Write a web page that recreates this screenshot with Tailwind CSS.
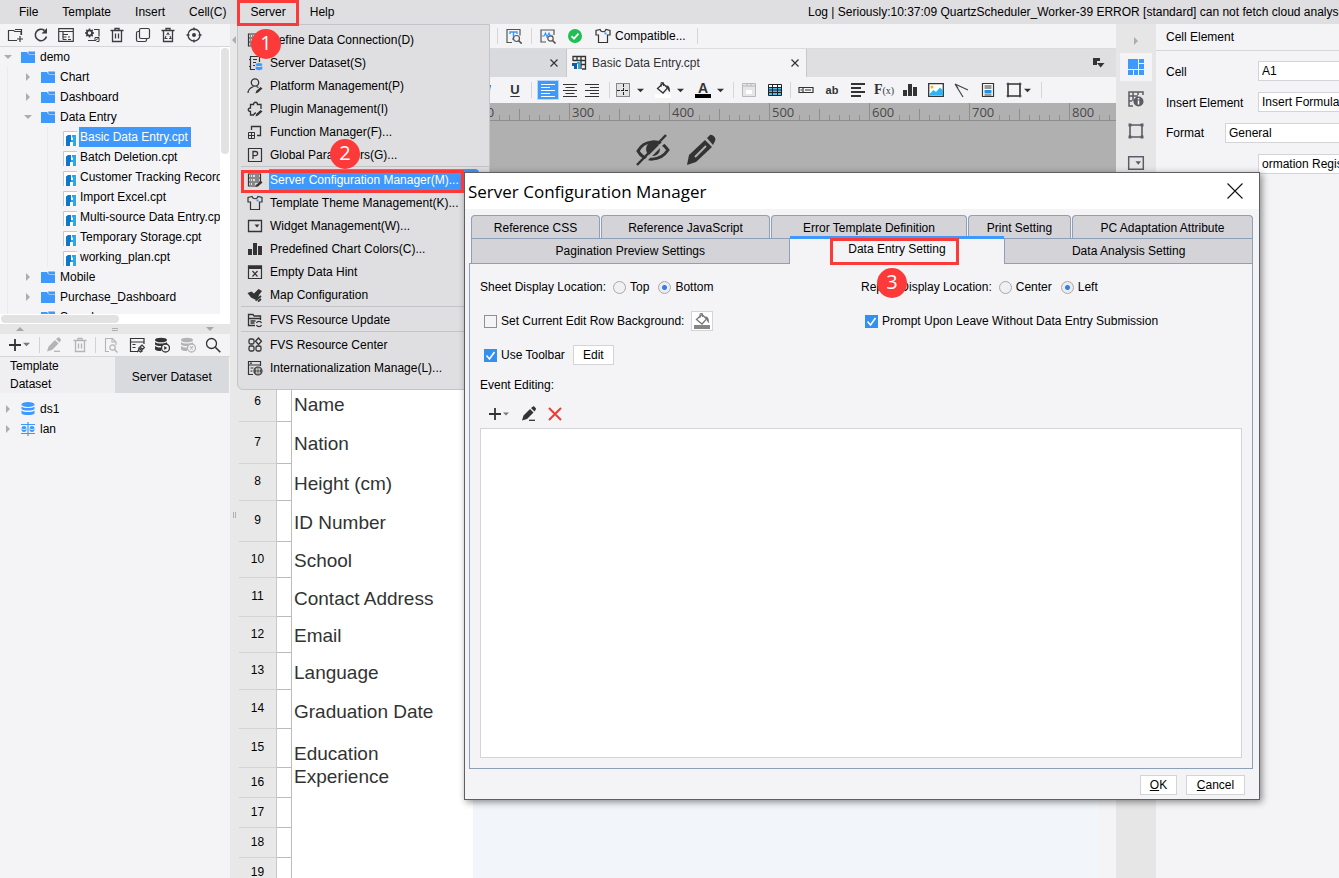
<!DOCTYPE html>
<html lang="en">
<head>
<meta charset="utf-8">
<title>Report Designer</title>
<script src="https://cdn.jsdelivr.net/npm/@tailwindcss/browser@4"></script>
</head>
<body class="h-screen overflow-hidden bg-[#f4f4f7] font-['Liberation_Sans',Arial,sans-serif] text-xs leading-5 text-black">

<!-- Shared icon set -->
<svg class="hidden" aria-hidden="true">
  <symbol id="folder" viewBox="0 0 16 14"><path d="M1 2h6l1 1.500h7V13H1z" fill="#3f98fb"/><path d="M8 1.500h7v3H9z" fill="#3f98fb"/><path d="M7.500 2.500l1.500 2h6" fill="none" stroke="#a9d0fd" stroke-width=".8"/></symbol>
  <symbol id="cpt" viewBox="0 0 14 15"><path d="M1 1h13v14H1z" fill="#fff"/><path d="M.500 15V.500H14" fill="none" stroke="#c8c8c8"/><path d="M3 15V5.500L5 4h3v5h2v2H7v4z" fill="#0a78cc"/><path d="M9 4h4v11h-3v-4H8V9h2V6.500H9z" fill="#2aa9ea"/></symbol>
  <symbol id="right" viewBox="0 0 8 8"><path d="M2 0l4 4-4 4z" fill="#adadad"/></symbol>
  <symbol id="down" viewBox="0 0 8 8"><path d="M0 2h8L4 6z" fill="currentColor"/></symbol>
  <symbol id="up" viewBox="0 0 8 8"><path d="M0 6h8L4 2z" fill="currentColor"/></symbol>
  <symbol id="newfolder" viewBox="0 0 16 16"><path d="M10 13.500H1.500v-10h5l1.500 1h6V8M8 2.500h6.500V8M10 12h6M13 9v6" fill="none" stroke="currentColor" stroke-width="1.200"/></symbol>
  <symbol id="refresh" viewBox="0 0 16 16"><path d="M13.500 9.500A5.700 5.700 0 1 1 11.500 3.500" fill="none" stroke="currentColor" stroke-width="1.600"/><path d="M14 1v5.500H8.500z" fill="currentColor"/></symbol>
  <symbol id="treewin" viewBox="0 0 16 16"><path d="M.700 1.700h14.600v12.600H.700zM.700 4.500h14.600M5 4.500v8M5 7.500h5M5 10h3.500M5 12.500h3.500M10 10h2M10 12.500h3" fill="none" stroke="currentColor" stroke-width="1.200"/></symbol>
  <symbol id="gearwin" viewBox="0 0 16 16"><path d="M10 2.500h5v7M4 13.500h7" fill="none" stroke="currentColor" stroke-width="1.200"/><circle cx="5.500" cy="6" r="2.600" fill="none" stroke="currentColor" stroke-width="1.800"/><path d="M5.500 1.500v2M5.500 8.500v2M1 6h2M8 6h2M2.300 2.800l1.400 1.400M7.300 7.800l1.400 1.400M8.700 2.800L7.300 4.200M3.700 7.800L2.300 9.200" stroke="currentColor" stroke-width="1.500"/><path d="M11 14v-3.500h4zM15 10.500v4h-2.500" fill="none" stroke="currentColor"/></symbol>
  <symbol id="trash" viewBox="0 0 16 16"><path d="M1.500 3.500h13M6 3V1.500h4V3M3.500 3.500v11h9v-11M6.500 6.500v5M9.500 6.500v5" fill="none" stroke="currentColor" stroke-width="1.300"/></symbol>
  <symbol id="copy" viewBox="0 0 16 16"><rect x="4.500" y="1.500" width="10" height="10" rx="1.500" fill="none" stroke="currentColor" stroke-width="1.200"/><path d="M4 4.500H3A1.500 1.500 0 0 0 1.500 6v7A1.500 1.500 0 0 0 3 14.500h7a1.500 1.500 0 0 0 1.500-1.500v-1" fill="none" stroke="currentColor" stroke-width="1.200"/></symbol>
  <symbol id="recycle" viewBox="0 0 16 16"><path d="M1.500 3.500h13M6 3V1.500h4V3M3.500 3.500v11h9v-11" fill="none" stroke="currentColor" stroke-width="1.300"/><path d="M6.700 8L8 6l1.300 2M10 9l1 2.500H9M7.500 11.500H5L6 9" fill="none" stroke="currentColor" stroke-width="1.100"/></symbol>
  <symbol id="target" viewBox="0 0 16 16"><circle cx="8" cy="8" r="6" fill="none" stroke="currentColor" stroke-width="1.300"/><circle cx="8" cy="8" r="2" fill="currentColor"/><path d="M8 .500v3M8 12.500v3M.500 8h3M12.500 8h3" stroke="currentColor" stroke-width="1.300"/></symbol>
  <symbol id="plus" viewBox="0 0 16 16"><path d="M8 2v12M2 8h12" stroke="currentColor" stroke-width="1.800"/></symbol>
  <symbol id="pencil" viewBox="0 0 16 16"><path d="M1 14.500l1.500-5L9 3l3.500 3.500L6 13zM10 2l2-1.500a1 1 0 0 1 1.300 0l1.500 1.700a1 1 0 0 1 0 1.300L13.500 5.500z" fill="currentColor"/><path d="M8 14.300h6" stroke="currentColor" stroke-width="1.300"/></symbol>
  <symbol id="docsearch" viewBox="0 0 16 16"><path d="M6 14.500H2.500v-13h7l3.500 3.500v3M9 1.500V5h4" fill="none" stroke="currentColor" stroke-width="1.100"/><circle cx="9.500" cy="10.500" r="2.700" fill="none" stroke="currentColor" stroke-width="1.200"/><path d="M11.500 12.500l3 3" stroke="currentColor" stroke-width="1.400"/></symbol>
  <symbol id="winlink" viewBox="0 0 16 16"><path d="M15 7V1.500H1.500v13H8M1.500 5H15M3.500 7.500h3M3.500 10.500h3" fill="none" stroke="currentColor" stroke-width="1.200"/><path d="M8 15l2-2M9.500 10.500l4 4M10 11l-.500 2.500 2 1.500 2-1M11 10l2-2 2.500 2.500-2 2z" fill="none" stroke="currentColor" stroke-width="1.200"/></symbol>
  <symbol id="dbplay" viewBox="0 0 16 16"><ellipse cx="7" cy="3" rx="6" ry="2.300" fill="currentColor"/><path d="M1 5c2 2 10 2 12 0v2.500C11 9.500 3 9.500 1 7.500zM1 9c2 1.500 5 1.700 6.500 1.500l-.500 3.500C4 14 2 13.500 1 12.500z" fill="currentColor"/><circle cx="11.500" cy="11" r="4" fill="#f4f4f7" stroke="currentColor" stroke-width="1.300"/><path d="M10.200 9v4l3-2z" fill="currentColor"/></symbol>
  <symbol id="dbx" viewBox="0 0 16 16"><ellipse cx="7" cy="3" rx="6" ry="2.300" fill="currentColor"/><path d="M1 5c2 2 10 2 12 0v2.500C11 9.500 3 9.500 1 7.500zM1 9c2 1.500 5 1.700 6.500 1.500l-.500 3.500C4 14 2 13.500 1 12.500z" fill="currentColor"/><circle cx="11.500" cy="11" r="4" fill="#f4f4f7" stroke="currentColor" stroke-width="1.300"/><path d="M10 9.500l3 3M13 9.500l-3 3" stroke="currentColor" stroke-width="1.200"/></symbol>
  <symbol id="search" viewBox="0 0 16 16"><circle cx="6.500" cy="6.500" r="5" fill="none" stroke="currentColor" stroke-width="1.300"/><path d="M10.300 10.300l5 5" stroke="currentColor" stroke-width="1.600"/></symbol>
  <symbol id="db" viewBox="0 0 14 16"><ellipse cx="7" cy="3.500" rx="6.500" ry="2.500" fill="#3f98fb"/><path d="M.500 5.500c2 2 11 2 13 0V8c-2 2-11 2-13 0zM.500 9.500c2 2 11 2 13 0v3c-2 2-11 2-13 0z" fill="#3f98fb"/></symbol>
  <symbol id="link" viewBox="0 0 16 16"><path d="M1 3.500h14M1 12.500h14M8 1v14" stroke="#3f98fb" stroke-width="1.200"/><ellipse cx="4" cy="8" rx="2.500" ry="3" fill="#3f98fb"/><ellipse cx="12" cy="8" rx="2.500" ry="3" fill="#3f98fb"/><path d="M1.500 7.500c2 1.500 3 1.500 5 0M9.500 7.500c2 1.500 3 1.500 5 0" fill="none" stroke="#cfe4fd"/></symbol>
  <symbol id="server" viewBox="0 0 16 16"><path d="M1.500 2h12v4h-12zM1.500 6v4h12V6M1.500 10v4H9M3 4h1M5 4h1M8 4h4M3 8h1M5 8h1M8 8h4M3 12h1M5 12h3" fill="none" stroke="currentColor" stroke-width="1.200"/><path d="M8.500 15l1-2.500L14 9l1.500 1.500-4.500 4z" fill="currentColor"/></symbol>
  <symbol id="serverds" viewBox="0 0 16 16"><path d="M8 14.500H3.500v-13h9V7M2 4.500h1.500M2 11.500h1.500M6 4.500h4M6 7.500h3M6 10.500h2" fill="none" stroke="currentColor" stroke-width="1.200"/><ellipse cx="12" cy="9.500" rx="3.300" ry="1.500" fill="#3f98fb"/><path d="M8.700 11c1 1.300 5.600 1.300 6.600 0v3c-1 1.500-5.600 1.500-6.600 0z" fill="#3f98fb"/></symbol>
  <symbol id="user" viewBox="0 0 16 16"><circle cx="8" cy="4.500" r="3.700" fill="none" stroke="currentColor" stroke-width="1.300"/><path d="M1 15c0-4 3-5.500 5.500-6.500M9.500 8.500l2 1" fill="none" stroke="currentColor" stroke-width="1.300"/><path d="M8.500 15.500l.700-2.500L13.500 9l2 1.500-4.500 4z" fill="currentColor"/></symbol>
  <symbol id="plugin" viewBox="0 0 16 16"><path d="M7 14H3.500v-3.500C.500 10.500 .500 7 3.500 7V3.500H6.500c0-3 4-3 4 0H14V8M7 14c0-1.500 1-2 2-2" fill="none" stroke="currentColor" stroke-width="1.300"/><path d="M8.500 15.500l.700-2.500L13.500 9l2 1.500-4.500 4z" fill="currentColor"/></symbol>
  <symbol id="func" viewBox="0 0 16 16"><path d="M4.500 6V2.500h9v9H10" fill="none" stroke="currentColor" stroke-width="1.300"/><path d="M1.500 8.500h6v6h-6zM1.500 11.500h6M4.500 8.500v6" fill="none" stroke="currentColor"/></symbol>
  <symbol id="param" viewBox="0 0 16 16"><path d="M1.500 1.500h13v13h-13z" fill="none" stroke="currentColor" stroke-width="1.200"/><path d="M6 12V4.500h2.500a2 2 0 0 1 0 4.200H6" fill="none" stroke="currentColor" stroke-width="1.300"/></symbol>
  <symbol id="shirt" viewBox="0 0 16 16"><path d="M5 1.500L1 2.500v4.500h2.500v7.500h9V7H15V2.500l-4-1c-1 3-5 3-6 0z" fill="none" stroke="currentColor" stroke-width="1.200"/><path d="M9 4.500h2.500v2H10z" fill="#3f98fb"/></symbol>
  <symbol id="combo" viewBox="0 0 16 16"><path d="M1.500 2.500h13v11h-13z" fill="none" stroke="currentColor" stroke-width="1.300"/><path d="M7.500 6.500h5L10 9.500z" fill="currentColor"/></symbol>
  <symbol id="bars" viewBox="0 0 16 16"><path d="M1 8h4v6H1zM6 2h4v12H6zM11 5h4v9h-4z" fill="currentColor"/></symbol>
  <symbol id="empty" viewBox="0 0 16 16"><path d="M1.500 2h13v12.500h-13z" fill="none" stroke="currentColor" stroke-width="1.200"/><path d="M1 1.500h14V5H1z" fill="currentColor"/><path d="M5.500 7l5 5.500M10.500 7l-5 5.500" stroke="currentColor" stroke-width="1.200"/></symbol>
  <symbol id="map" viewBox="0 0 16 16"><path d="M.500 6l4-1.500L7 6.500 11.500 2 15 4l-3 4-1 3-3 1.500-4-2z" fill="currentColor"/><path d="M8.500 13.500L14 9M11 14.500l3-2.500" stroke="currentColor" stroke-width="1.800"/></symbol>
  <symbol id="fvsup" viewBox="0 0 16 16"><path d="M8 13.500H1.500v-11H6l1 1.500h6.500V8M1.500 6.500h12M3.500 9h5M3.500 11h4" fill="none" stroke="currentColor" stroke-width="1.300"/><path d="M14.500 11a2.700 2.700 0 0 0-5 0M9.500 13a2.700 2.700 0 0 0 5 0" fill="none" stroke="currentColor" stroke-width="1.300"/></symbol>
  <symbol id="fvsc" viewBox="0 0 16 16"><rect x="2" y="2" width="5" height="5" rx="1.500" fill="none" stroke="currentColor" stroke-width="1.300"/><rect x="2" y="9" width="5" height="5" rx="1.500" fill="none" stroke="currentColor" stroke-width="1.300"/><rect x="9" y="9" width="5" height="5" rx="1.500" fill="none" stroke="currentColor" stroke-width="1.300"/><path d="M11.500 1l3 3.300-3 3.200-3-3.200z" fill="none" stroke="currentColor" stroke-width="1.300"/></symbol>
  <symbol id="intl" viewBox="0 0 16 16"><path d="M6 14.500H1.500v-13h12V6M1.500 5h12M3 3.200h2M3.500 8h3M3.500 11h2" fill="none" stroke="currentColor" stroke-width="1.200"/><circle cx="11" cy="11" r="4" fill="none" stroke="currentColor" stroke-width="1.200"/><path d="M7 11h8M11 7v8M9 8c-.600 2-.600 4 0 6M13 8c.600 2 .600 4 0 6" fill="none" stroke="currentColor" stroke-width=".8"/></symbol>
  <symbol id="tfind" viewBox="0 0 16 16"><path d="M6 14.500H1v-13h13v6" fill="none" stroke="#555" stroke-width="1.200"/><path d="M4 6V4h7v2M7.500 4v7M6 11h3" fill="none" stroke="#3f98fb" stroke-width="1.400"/><circle cx="10.500" cy="10.500" r="3" fill="#f4f4f7" stroke="#555" stroke-width="1.200"/><path d="M12.700 12.700l3 3" stroke="#555" stroke-width="1.600"/></symbol>
  <symbol id="wave" viewBox="0 0 16 16"><path d="M6 14H1V2h13v5" fill="none" stroke="#555" stroke-width="1.200"/><path d="M2 8h2l1.500-3L7 9l2-4 1.500 3H13" fill="none" stroke="#3f98fb" stroke-width="1.200"/><circle cx="10.500" cy="10.500" r="2.700" fill="#f4f4f7" stroke="#555" stroke-width="1.200"/><path d="M12.500 12.500l3 3" stroke="#555" stroke-width="1.600"/></symbol>
  <symbol id="ok" viewBox="0 0 16 16"><circle cx="8" cy="8" r="7" fill="#1fbf54"/><path d="M4.500 8.200l2.500 2.500 4.500-5" fill="none" stroke="#fff" stroke-width="1.800"/></symbol>
  <symbol id="close" viewBox="0 0 8 8"><path d="M.500.500l7 7M7.500.500l-7 7" stroke="currentColor" stroke-width="1.200"/></symbol>
  <symbol id="bucket" viewBox="0 0 16 12"><path d="M2.500 6.500L8 1.500l4.500 4.500L8 11z" fill="none" stroke="currentColor" stroke-width="1.300"/><path d="M6 5V.700h2.500V4" fill="none" stroke="currentColor"/><path d="M11 3.500c3 0 4 1.500 4 6.500-1.500-.500-2-2-2.500-4z" fill="currentColor"/></symbol>
  <symbol id="tl" viewBox="0 0 16 14"><path d="M1 1.500h14M1 4.500h9M1 7.500h14M1 10.500h9M1 13.500h14" stroke="currentColor"/></symbol>
  <symbol id="tc" viewBox="0 0 16 14"><path d="M1 1.500h14M3.500 4.500h9M1 7.500h14M3.500 10.500h9M1 13.500h14" stroke="currentColor"/></symbol>
  <symbol id="tr" viewBox="0 0 16 14"><path d="M1 1.500h14M6 4.500h9M1 7.500h14M6 10.500h9M1 13.500h14" stroke="currentColor"/></symbol>
</svg>

<div class="flex h-full flex-col">
  <!-- Menu bar -->
  <header class="flex h-6 shrink-0 items-center bg-[#dfdfe2] whitespace-nowrap">
    <nav class="flex w-[808px] shrink-0 gap-6 pl-[19px]">
      <button>File</button><button>Template</button><button>Insert</button><button>Cell(C)</button><button>Server</button><button>Help</button>
    </nav>
    <p class="min-w-0 flex-1 overflow-hidden">Log | Seriously:10:37:09 QuartzScheduler_Worker-39 ERROR [standard] can not fetch cloud analysis</p>
  </header>

  <div class="flex min-h-0 flex-1">
    <!-- Left sidebar -->
    <aside class="flex w-[230px] shrink-0 flex-col">
      <div class="flex h-[23px] shrink-0 items-center justify-between border-b border-[#d6d6d9] pr-7 pb-px pl-[7px] text-[#3c3c40]">
        <button aria-label="New folder"><svg class="size-4"><use href="#newfolder"/></svg></button>
        <button aria-label="Refresh"><svg class="size-4"><use href="#refresh"/></svg></button>
        <button aria-label="Show in tree"><svg class="size-4"><use href="#treewin"/></svg></button>
        <button aria-label="Settings"><svg class="size-4"><use href="#gearwin"/></svg></button>
        <button aria-label="Delete"><svg class="size-4"><use href="#trash"/></svg></button>
        <button aria-label="Copy"><svg class="size-4"><use href="#copy"/></svg></button>
        <button aria-label="Recycle bin"><svg class="size-4"><use href="#recycle"/></svg></button>
        <button aria-label="Locate"><svg class="size-4"><use href="#target"/></svg></button>
      </div>
      <div class="flex h-[267px] shrink-0">
        <ul class="min-w-0 flex-1 overflow-hidden whitespace-nowrap">
          <li class="flex h-5 items-center pl-1"><svg class="size-2 text-[#adadad]"><use href="#down"/></svg><svg class="ml-2 h-[14px] w-4"><use href="#folder"/></svg><span class="ml-1">demo</span></li>
          <li class="ml-[7px] border-l border-[#eaeaed]">
            <ul>
              <li class="flex h-5 items-center pl-4"><svg class="size-2"><use href="#right"/></svg><svg class="ml-2 h-[14px] w-4"><use href="#folder"/></svg><span class="ml-1">Chart</span></li>
              <li class="flex h-5 items-center pl-4"><svg class="size-2"><use href="#right"/></svg><svg class="ml-2 h-[14px] w-4"><use href="#folder"/></svg><span class="ml-1">Dashboard</span></li>
              <li class="flex h-5 items-center pl-4"><svg class="size-2 text-[#adadad]"><use href="#down"/></svg><svg class="ml-2 h-[14px] w-4"><use href="#folder"/></svg><span class="ml-1">Data Entry</span></li>
              <li class="ml-[39px] border-l border-[#eaeaed]">
                <ul>
                  <li class="flex h-5 items-center pl-[15px]"><svg class="mt-[3px] h-[15px] w-[14px]"><use href="#cpt"/></svg><span class="ml-[2px] bg-[#3f98fb] pr-[3px] pl-[1px] text-white">Basic Data Entry.cpt</span></li>
                  <li class="flex h-5 items-center pl-[15px]"><svg class="mt-[3px] h-[15px] w-[14px] shrink-0"><use href="#cpt"/></svg><span class="ml-[3px]">Batch Deletion.cpt</span></li>
                  <li class="flex h-5 items-center pl-[15px]"><svg class="mt-[3px] h-[15px] w-[14px] shrink-0"><use href="#cpt"/></svg><span class="ml-[3px]">Customer Tracking Record.cpt</span></li>
                  <li class="flex h-5 items-center pl-[15px]"><svg class="mt-[3px] h-[15px] w-[14px] shrink-0"><use href="#cpt"/></svg><span class="ml-[3px]">Import Excel.cpt</span></li>
                  <li class="flex h-5 items-center pl-[15px]"><svg class="mt-[3px] h-[15px] w-[14px] shrink-0"><use href="#cpt"/></svg><span class="ml-[3px]">Multi-source Data Entry.cpt</span></li>
                  <li class="flex h-5 items-center pl-[15px]"><svg class="mt-[3px] h-[15px] w-[14px] shrink-0"><use href="#cpt"/></svg><span class="ml-[3px]">Temporary Storage.cpt</span></li>
                  <li class="flex h-5 items-center pl-[15px]"><svg class="mt-[3px] h-[15px] w-[14px] shrink-0"><use href="#cpt"/></svg><span class="ml-[3px]">working_plan.cpt</span></li>
                </ul>
              </li>
              <li class="flex h-5 items-center pl-4"><svg class="size-2"><use href="#right"/></svg><svg class="ml-2 h-[14px] w-4"><use href="#folder"/></svg><span class="ml-1">Mobile</span></li>
              <li class="flex h-5 items-center pl-4"><svg class="size-2"><use href="#right"/></svg><svg class="ml-2 h-[14px] w-4"><use href="#folder"/></svg><span class="ml-1">Purchase_Dashboard</span></li>
              <li class="flex h-5 items-center pl-4"><svg class="invisible size-2"><use href="#right"/></svg><svg class="ml-2 h-[14px] w-4"><use href="#folder"/></svg><span class="ml-1">Sample</span></li>
            </ul>
          </li>
        </ul>
        <div class="w-[10px] bg-white pt-[1px] pl-[1px]"><div class="h-[106px] w-2 rounded bg-[#e2e2e2]"></div></div>
      </div>
      <div class="flex h-[10px] shrink-0 bg-white pt-[1px] pl-[1px]"><div class="h-2 w-[118px] rounded bg-[#e2e2e2]"></div></div>
      <div class="flex h-[10px] shrink-0 items-center justify-between bg-[#e6e6e6] pr-4 pl-4 text-[#a8a8a8]">
        <svg class="size-2"><use href="#up"/></svg><div class="h-[3px] w-[6px] border-y border-[#b0b0b0]"></div><svg class="size-2"><use href="#down"/></svg>
      </div>
      <div class="flex h-[23px] shrink-0 items-center border-b border-[#d6d6d9] pb-px pl-[7px] text-[#333]">
        <button class="flex items-center" aria-label="Add dataset"><svg class="size-4"><use href="#plus"/></svg><svg class="size-[7px] text-[#777]"><use href="#down"/></svg></button>
        <div class="ml-[9px] h-4 w-px bg-[#d2d2d5]"></div>
        <div class="ml-[6px] flex gap-[10px] text-[#b4b4b6]">
          <button aria-label="Edit"><svg class="size-4"><use href="#pencil"/></svg></button>
          <button aria-label="Delete"><svg class="size-4"><use href="#trash"/></svg></button>
        </div>
        <div class="ml-[7px] h-4 w-px bg-[#d2d2d5]"></div>
        <div class="flex flex-1 justify-between pr-[9px] pl-[7px]">
          <button class="text-[#b4b4b6]" aria-label="Preview"><svg class="size-4"><use href="#docsearch"/></svg></button>
          <button aria-label="Connection"><svg class="size-4"><use href="#winlink"/></svg></button>
          <button aria-label="Run"><svg class="size-4"><use href="#dbplay"/></svg></button>
          <button class="text-[#b4b4b6]" aria-label="Stop"><svg class="size-4"><use href="#dbx"/></svg></button>
          <button aria-label="Search"><svg class="size-4"><use href="#search"/></svg></button>
        </div>
      </div>
      <div class="grid h-9 shrink-0 grid-cols-2 pr-px">
        <button class="bg-[#efeff2] pr-10 pl-[10px] text-left leading-[18px]">Template Dataset</button>
        <button class="bg-[#d9dade] pt-[3px]">Server Dataset</button>
      </div>
      <ul class="pt-[6px]">
        <li class="flex h-5 items-center pl-1"><svg class="size-2"><use href="#right"/></svg><svg class="ml-[9px] h-4 w-[14px]"><use href="#db"/></svg><span class="ml-[5px]">ds1</span></li>
        <li class="flex h-5 items-center pl-1"><svg class="size-2"><use href="#right"/></svg><svg class="ml-2 size-4"><use href="#link"/></svg><span class="ml-1">lan</span></li>
      </ul>
    </aside>

    <!-- Splitter -->
    <div class="flex w-[9px] shrink-0 flex-col justify-between bg-[#e8e8e8] pt-3 pb-[360px]">
      <svg class="size-2 rotate-180"><use href="#right"/></svg>
      <div class="ml-[3px] h-[6px] w-[3px] border-x border-[#b0b0b0]"></div>
    </div>

    <!-- Designer -->
    <main class="flex min-w-0 flex-1 flex-col">
      <div class="flex h-[25px] shrink-0 items-center border-b border-[#dcdcdf] pl-[258px] text-[#333]">
        <div class="h-4 w-px bg-[#d6d6d9]"></div>
        <button class="ml-2" aria-label="Find template"><svg class="size-4"><use href="#tfind"/></svg></button>
        <div class="ml-[9px] h-4 w-px bg-[#d6d6d9]"></div>
        <button class="ml-2" aria-label="Performance"><svg class="size-4"><use href="#wave"/></svg></button>
        <button class="ml-[11px]" aria-label="Status"><svg class="size-4"><use href="#ok"/></svg></button>
        <button class="ml-3 flex items-center gap-[4px] text-black"><svg class="size-4 text-[#333]"><use href="#shirt"/></svg>Compatible...</button>
        <div class="ml-[11px] h-4 w-px bg-[#d6d6d9]"></div>
      </div>
      <div class="flex h-[28px] shrink-0 items-center bg-[#dfdfe2] text-[#333]">
        <div class="flex h-full w-[328px] items-center justify-end border-r border-[#c8c8cc] bg-[#d9dade] pr-2"><button aria-label="Close tab"><svg class="size-2"><use href="#close"/></svg></button></div>
        <div class="flex h-full w-[240px] items-center border-r border-[#c8c8cc] bg-[#f4f4f7] pr-[7px] pl-[4px]">
          <svg class="size-4" viewBox="0 0 16 16"><path d="M2 6V1.500h12.500V14H11M2 5.500h12.500M6 1.500V6M10 1.500V14M10 9.500h4.500" fill="none" stroke="#333" stroke-width="1.300"/><path d="M1 8h5v6H3v-3H1z" fill="#0b5fa8"/><path d="M6 7h3v7H7V9H6z" fill="#2aa9ea"/></svg>
          <span class="ml-[5px] flex-1">Basic Data Entry.cpt</span>
          <button aria-label="Close Basic Data Entry.cpt"><svg class="size-2"><use href="#close"/></svg></button>
        </div>
        <button class="mr-[11px] ml-auto" aria-label="Tab list"><svg class="h-3 w-[13px]" viewBox="0 0 13 12"><path d="M1 1h7v3H5v4H1z" fill="#333"/><path d="M5 6h7.500L8.700 10.500z" fill="#333"/></svg></button>
      </div>
      <div class="flex h-[26px] shrink-0 items-center pl-[244px] text-[#333]">
        <button class="mr-[7px] w-3 text-sm italic" aria-label="Italic">I</button>
        <button class="w-[26px] text-[13px] font-bold underline underline-offset-2">U</button>
        <div class="ml-[3px] h-4 w-px bg-[#d6d6d9]"></div>
        <button class="ml-[5px] grid h-5 w-[22px] place-items-center border border-[#b9d6f8] bg-[#3f98fb] text-white" aria-label="Align left"><svg class="h-[14px] w-4"><use href="#tl"/></svg></button>
        <button class="ml-[3px]" aria-label="Align center"><svg class="h-[14px] w-4"><use href="#tc"/></svg></button>
        <button class="ml-[6px]" aria-label="Align right"><svg class="h-[14px] w-4"><use href="#tr"/></svg></button>
        <div class="ml-[9px] h-4 w-px bg-[#d6d6d9]"></div>
        <button class="ml-[5px] flex items-center gap-[6px]" aria-label="Borders"><svg class="size-4" viewBox="0 0 16 16"><path d="M1.500 1.500h13v13h-13z" fill="#e2e2e5" stroke="#222" stroke-dasharray="1 1"/><path d="M8.500 2v12M2 8.500h12" stroke="#222" stroke-dasharray="3 1"/></svg><svg class="size-[7px]"><use href="#down"/></svg></button>
        <button class="ml-[11px] flex items-center gap-[6px]" aria-label="Fill colour"><span class="border-b-[4px] border-white"><svg class="h-3 w-4"><use href="#bucket"/></svg></span><svg class="size-[7px]"><use href="#down"/></svg></button>
        <button class="ml-[11px] flex items-center gap-[6px]" aria-label="Text colour"><span class="h-4 w-4 border-b-[4px] border-black text-sm leading-3 font-bold">A</span><svg class="size-[7px]"><use href="#down"/></svg></button>
        <div class="ml-[9px] h-4 w-px bg-[#d6d6d9]"></div>
        <div class="ml-[7px] flex items-center gap-[10px]">
          <button aria-label="Merge cells"><svg class="size-4" viewBox="0 0 16 16"><path d="M1.500 1.500h13v13h-13zM1.500 4h13M6 1.500V4M10 1.500V4" fill="#e6e6e9" stroke="#b8b8ba"/><path d="M5 8h6v4H5z" fill="#fff"/></svg></button>
          <button aria-label="Split cells"><svg class="size-4" viewBox="0 0 16 16"><path d="M1.500 2.500h13v11h-13z" fill="#45bdf5"/><path d="M1 2.500h14v3H1z" fill="#fff"/><path d="M1.500 2.500h13v11h-13zM1.500 5.500h13M1.500 8h13M1.500 10.500h13M5.500 2v12M10.500 2v12" fill="none" stroke="#222"/></svg></button>
          <span class="-mx-[3px] h-4 w-px bg-[#d6d6d9]"></span>
          <button aria-label="Widget"><svg class="size-4" viewBox="0 0 16 16"><path d="M1 5.500h14v5H1zM5 5.500v5M7 8h6M2.500 8h1.500" fill="none" stroke="#333" stroke-width="1.200"/></svg></button>
          <button class="w-4 text-[11px] font-bold">ab</button>
          <button aria-label="Rich text"><svg class="size-4" viewBox="0 0 16 16"><path d="M1 2h14M1 6h10M1 10h14M1 14h10" stroke="#333" stroke-width="1.800"/></svg></button>
          <button class="flex w-4 items-baseline justify-center font-['Liberation_Serif',serif] text-sm font-bold" aria-label="Formula">F<span class="text-[10px] font-normal">(x)</span></button>
          <button aria-label="Chart"><svg class="size-4"><use href="#bars"/></svg></button>
          <button aria-label="Image"><svg class="size-4" viewBox="0 0 16 16"><path d="M.700 1.700h14.600v12.600H.700z" fill="#fff" stroke="#333" stroke-width="1.300"/><path d="M1.500 12l4-4 2.500 2 4-4.500 3 3v5h-13.500z" fill="#2fb4f3"/><circle cx="4" cy="5" r="1.500" fill="#f7b32b"/></svg></button>
          <button aria-label="Slope"><svg class="size-4" viewBox="0 0 16 16"><path d="M1 2l13 6M1 2l8 13M1 2l3 4" fill="none" stroke="#444" stroke-width="1.200"/></svg></button>
          <button aria-label="Sub report"><svg class="size-4" viewBox="0 0 16 16"><path d="M2.500 1.500h11v13h-11z" fill="#fff" stroke="#333" stroke-width="1.200"/><path d="M4.500 4h7M4.500 6h7M4.500 13h7" stroke="#333"/><path d="M4.500 8h7v3.500h-7z" fill="#2090e8"/></svg></button>
          <button class="flex items-center" aria-label="Frame"><svg class="size-4" viewBox="0 0 16 16"><path d="M2 2h12v12H2z" fill="none" stroke="#333" stroke-width="1.200"/><path d="M.500 2h15M.500 14h15M2 .500v15M14 .500v15" stroke="#333"/></svg><svg class="ml-[2px] size-[7px]"><use href="#down"/></svg></button>
          <span class="h-4 w-px bg-[#d6d6d9]"></span>
        </div>
      </div>
      <!-- Ruler -->
      <div class="flex h-[18px] shrink-0 overflow-hidden border-b border-[#8e8e8e] bg-[#b0b0b0] pl-[30px] font-['Open_Sans',sans-serif] text-[13px] leading-[18px] text-[#4a4a4a]">
        <svg class="h-[17px] w-full" aria-label="Ruler">
          <defs><pattern id="ticks" width="100" height="17" patternUnits="userSpaceOnUse"><path d="M.500 0v17M50.500 6v11M40.500 12v5M30.500 12v5M60.500 12v5M70.500 12v5M80.500 12v5M90.500 12v5" stroke="#8e8e8e"/></pattern></defs>
          <rect width="100%" height="17" fill="url(#ticks)"/>
          <g fill="#4a4a4a"><text x="203" y="14">200</text><text x="303" y="14">300</text><text x="403" y="14">400</text><text x="503" y="14">500</text><text x="603" y="14">600</text><text x="703" y="14">700</text><text x="803" y="14">800</text></g>
        </svg>
      </div>
      <!-- Sheet -->
      <div class="flex h-[261px] shrink-0 items-start bg-[#b0b0b0] pt-[13px] pl-[396px] text-[#333]">
        <svg class="h-8 w-9" viewBox="0 0 36 32"><path d="M3 17c6-11 22-13 30-1-8 12-24 12-30 1z" fill="none" stroke="currentColor" stroke-width="3"/><circle cx="18" cy="15" r="7" fill="currentColor"/><path d="M4 33L34 3" stroke="#b0b0b0" stroke-width="3"/><path d="M2 31L31 1" stroke="currentColor" stroke-width="2.500"/></svg>
        <svg class="ml-[14px] size-8" viewBox="0 0 32 32"><path d="M2 31l2-10L20 6l7 7-16 15zM22 4l3-3c2-1 7 3 5 6l-2 4z" fill="currentColor"/><path d="M10 23L21 12" stroke="#b0b0b0" stroke-width="2"/></svg>
      </div>
      <div class="flex min-h-0 flex-1 overflow-hidden">
        <table class="w-[234px] shrink-0 table-fixed border-separate border-spacing-0 self-start bg-white">
          <colgroup><col class="w-[38px]"><col class="w-[15px]"><col></colgroup>
          <tbody class="[&_td]:p-0 [&_th]:border-r [&_th]:border-b [&_th]:border-[#c8c8c8] [&_th]:border-b-[#d4d4d8] [&_th]:bg-[#e8e8e8] [&_th]:p-0 [&_th]:pb-[2px] [&_th]:font-normal">
            <tr class="h-[40px]"><th>6</th><td class="border-r border-b border-[#bcbcbc]"></td><td class="pl-[2px]! pt-[6px]! text-[19px] text-[#333]">Name</td></tr>
            <tr class="h-[42px]"><th>7</th><td class="border-r border-b border-[#bcbcbc]"></td><td class="pl-[2px]! pt-[2px]! text-[19px] text-[#333]">Nation</td></tr>
            <tr class="h-[37px]"><th>8</th><td class="border-r border-b border-[#bcbcbc]"></td><td class="pl-[2px]! pt-[2px]! text-[19px] text-[#333]">Height (cm)</td></tr>
            <tr class="h-[41px]"><th>9</th><td class="border-r border-b border-[#bcbcbc]"></td><td class="pl-[2px]! pt-[2px]! text-[19px] text-[#333]">ID Number</td></tr>
            <tr class="h-[36px]"><th>10</th><td class="border-r border-b border-[#bcbcbc]"></td><td class="pl-[2px]! pt-[2px]! text-[19px] text-[#333]">School</td></tr>
            <tr class="h-[39px]"><th>11</th><td class="border-r border-b border-[#bcbcbc]"></td><td class="pl-[2px]! pt-[2px]! text-[19px] text-[#333]">Contact Address</td></tr>
            <tr class="h-[36px]"><th>12</th><td class="border-r border-b border-[#bcbcbc]"></td><td class="pl-[2px]! pt-[2px]! text-[19px] text-[#333]">Email</td></tr>
            <tr class="h-[37px]"><th>13</th><td class="border-r border-b border-[#bcbcbc]"></td><td class="pl-[2px]! pt-[2px]! text-[19px] text-[#333]">Language</td></tr>
            <tr class="h-[39px]"><th>14</th><td class="border-r border-b border-[#bcbcbc]"></td><td class="pl-[2px]! pt-[4px]! text-[19px] text-[#333]">Graduation Date</td></tr>
            <tr class="h-[39px]"><th>15</th><td class="border-r border-b border-[#bcbcbc]"></td><td rowspan="2" class="pl-[2px]! pt-[2px]! text-[19px] leading-[23px] text-[#333]">Education<br>Experience</td></tr>
            <tr class="h-[30px]"><th>16</th><td class="border-r border-b border-[#bcbcbc]"></td></tr>
            <tr class="h-[30px]"><th>17</th><td class="border-r border-b border-[#bcbcbc]"></td><td></td></tr>
            <tr class="h-[30px]"><th>18</th><td class="border-r border-b border-[#bcbcbc]"></td><td></td></tr>
            <tr class="h-[30px]"><th>19</th><td class="border-r border-b border-[#bcbcbc]"></td><td></td></tr>
          </tbody>
        </table>
        <div class="mr-[18px] flex-1 bg-[#f2f6fa]"></div>
      </div>
    </main>

    <!-- Property tabs -->
    <div class="flex w-10 shrink-0 flex-col items-center bg-[#e6e6e6] pt-[13px] text-[#5c5c66]">
      <svg class="size-2"><use href="#right"/></svg>
      <button class="mt-2 grid h-7 w-8 place-items-center bg-[#f4f4f7]" aria-label="Cell element"><svg class="size-4" viewBox="0 0 16 16"><path d="M0 0h10v10H0zM11 0h5v4h-5zM11 5h5v5h-5zM0 11h5v5H0zM6 11h4v5H6zM11 11h5v5h-5z" fill="#3f98fb"/></svg></button>
      <button class="mt-1 grid h-7 w-8 place-items-center" aria-label="Cell attribute"><svg class="size-4" viewBox="0 0 16 16"><path d="M5 15H1V1h14v3M1 5h9M5 1v9M10 1v3M1 10h3" fill="none" stroke="currentColor" stroke-width="1.500"/><circle cx="10.500" cy="10.500" r="5" fill="currentColor"/><path d="M10.500 7v1.500M10.500 9.500v4" stroke="#fff" stroke-width="1.500"/></svg></button>
      <button class="mt-1 grid h-7 w-8 place-items-center" aria-label="Floating element"><svg class="size-4" viewBox="0 0 16 16"><path d="M2 2h12v12H2z" fill="none" stroke="currentColor" stroke-width="1.600"/><path d="M.500.500h3v3h-3zM12.500.500h3v3h-3zM.500 12.500h3v3h-3zM12.500 12.500h3v3h-3z" fill="currentColor"/></svg></button>
      <button class="mt-1 grid h-7 w-8 place-items-center" aria-label="Widget settings"><svg class="size-[18px]"><use href="#combo"/></svg></button>
    </div>

    <!-- Property panel -->
    <aside class="w-[183px] shrink-0 overflow-hidden">
      <div class="w-[240px]">
        <h2 class="h-[27px] border-b border-[#d6d6d9] pt-[3px] pl-[10px]">Cell Element</h2>
        <div class="flex flex-col gap-[11px] pt-[10px] pl-[10px]">
          <div class="flex h-5 items-center"><label for="cell" class="w-[92px] shrink-0 pt-[2px]">Cell</label><input id="cell" value="A1" class="h-5 min-w-0 flex-1 border border-[#d4d4d8] bg-white px-[3px]"></div>
          <div class="flex h-5 items-center"><label for="ins" class="w-[92px] shrink-0 pt-[2px] whitespace-nowrap">Insert Element</label><select id="ins" class="h-5 min-w-0 flex-1 appearance-none border border-[#d4d4d8] bg-white px-[3px] leading-[18px]"><option>Insert Formula</option></select></div>
          <div class="flex h-5 items-center"><label for="fmt" class="w-[59px] shrink-0">Format</label><select id="fmt" class="h-5 min-w-0 flex-1 appearance-none border border-[#d4d4d8] bg-white px-[3px] leading-[18px]"><option>General</option></select></div>
          <div class="flex h-5 items-center"><label for="reg" class="w-[92px] shrink-0 overflow-hidden pt-[26px] whitespace-nowrap">ormation Registration</label><input id="reg" value="ormation Registration" class="h-5 min-w-0 flex-1 border border-[#d4d4d8] bg-white px-[3px]"></div>
        </div>
      </div>
    </aside>
  </div>
</div>

<!-- Server menu -->
<div class="absolute top-6 left-[237px] flex w-[253px] flex-col rounded-bl-md border border-[#c4c4c8] bg-[#dfdfe2] pt-[3px] pb-[10px] pl-[3px] text-[#333]" role="menu">
  <button role="menuitem" class="flex h-[23px] items-center pl-[6px] text-left"><svg class="mr-[7px] size-4"><use href="#server"/></svg><span class="text-black">Define Data Connection(D)</span></button>
  <button role="menuitem" class="flex h-[23px] items-center pl-[6px] text-left"><svg class="mr-[7px] size-4"><use href="#serverds"/></svg><span class="text-black">Server Dataset(S)</span></button>
  <button role="menuitem" class="flex h-[23px] items-center pl-[6px] text-left"><svg class="mr-[7px] size-4"><use href="#user"/></svg><span class="text-black">Platform Management(P)</span></button>
  <button role="menuitem" class="flex h-[23px] items-center pl-[6px] text-left"><svg class="mr-[7px] size-4"><use href="#plugin"/></svg><span class="text-black">Plugin Management(I)</span></button>
  <button role="menuitem" class="flex h-[23px] items-center pl-[6px] text-left"><svg class="mr-[7px] size-4"><use href="#func"/></svg><span class="text-black">Function Manager(F)...</span></button>
  <button role="menuitem" class="flex h-[23px] items-center pl-[6px] text-left"><svg class="mr-[7px] size-4"><use href="#param"/></svg><span class="text-black">Global Parameters(G)...</span></button>
  <div class="h-[2px] border-t border-[#c4c4c8]"></div>
  <button role="menuitem" class="flex h-[23px] items-center pl-[6px] text-left"><svg class="mr-[6px] size-4 shrink-0"><use href="#server"/></svg><span class="mr-[10px] flex-1 rounded-tr bg-[#3f98fb] pt-px pl-[1px] leading-[21px] text-white">Server Configuration Manager(M)...</span></button>
  <button role="menuitem" class="flex h-[23px] items-center pl-[6px] text-left"><svg class="mr-[7px] size-4"><use href="#shirt"/></svg><span class="text-black">Template Theme Management(K)...</span></button>
  <button role="menuitem" class="flex h-[23px] items-center pl-[6px] text-left"><svg class="mr-[7px] size-4"><use href="#combo"/></svg><span class="text-black">Widget Management(W)...</span></button>
  <button role="menuitem" class="flex h-[23px] items-center pl-[6px] text-left"><svg class="mr-[7px] size-4"><use href="#bars"/></svg><span class="text-black">Predefined Chart Colors(C)...</span></button>
  <button role="menuitem" class="flex h-[23px] items-center pl-[6px] text-left"><svg class="mr-[7px] size-4"><use href="#empty"/></svg><span class="text-black">Empty Data Hint</span></button>
  <button role="menuitem" class="flex h-[23px] items-center pl-[6px] text-left"><svg class="mr-[7px] size-4"><use href="#map"/></svg><span class="text-black">Map Configuration</span></button>
  <div class="h-[2px] border-t border-[#c4c4c8]"></div>
  <button role="menuitem" class="flex h-[23px] items-center pl-[6px] text-left"><svg class="mr-[7px] size-4"><use href="#fvsup"/></svg><span class="text-black">FVS Resource Update</span></button>
  <div class="h-[2px] border-t border-[#c4c4c8]"></div>
  <button role="menuitem" class="flex h-[23px] items-center pl-[6px] text-left"><svg class="mr-[7px] size-4"><use href="#fvsc"/></svg><span class="text-black">FVS Resource Center</span></button>
  <button role="menuitem" class="flex h-[23px] items-center pl-[6px] text-left"><svg class="mr-[7px] size-4"><use href="#intl"/></svg><span class="text-black">Internationalization Manage(L)...</span></button>
</div>

<!-- Dialog -->
<section role="dialog" aria-labelledby="dlg" class="absolute top-[172px] left-[464px] w-[796px] border border-[#5f5f63] bg-[#f4f4f7] shadow-[2px_2px_7px_rgba(0,0,0,0.45)]">
  <div class="flex h-9 items-center justify-between bg-white pr-4 pl-[3px]">
    <h1 id="dlg" class="pt-px font-['Open_Sans',sans-serif] text-[17px]">Server Configuration Manager</h1>
    <button aria-label="Close"><svg class="size-4" viewBox="0 0 16 16"><path d="M.500.500l15 15M15.500.500l-15 15" stroke="#111" stroke-width="1.100"/></svg></button>
  </div>
  <div class="pr-[6px] pl-1">
    <div role="tablist" class="pt-[6px] pl-[2px]">
      <div class="grid h-[23px] grid-cols-[129fr_169fr_196fr_103fr_181fr] gap-x-[1px] [&>button]:rounded-t-sm [&>button]:border [&>button]:border-b-0 [&>button]:border-[#8f9fb8] [&>button]:bg-[#d3d3d8] [&>button]:pt-[2px]">
        <button role="tab">Reference CSS</button><button role="tab">Reference JavaScript</button><button role="tab">Error Template Definition</button><button role="tab">Print Setting</button><button role="tab">PC Adaptation Attribute</button>
      </div>
      <div class="grid h-[25px] grid-cols-[319fr_215fr_249fr] [&>button]:border-[#8f9fb8]">
        <button role="tab" class="border border-b-0 bg-[#d3d3d8] pb-px">Pagination Preview Settings</button>
        <button role="tab" aria-selected="true" class="-mt-[2px] border-t-[3px] border-t-[#3f98fb]! bg-[#f4f4f7] pb-[5px]">Data Entry Setting</button>
        <button role="tab" class="border border-b-0 bg-[#d3d3d8] pb-px">Data Analysis Setting</button>
      </div>
    </div>
    <div class="grid grid-cols-[321fr_215fr_249fr]"><div class="h-px bg-[#8f9fb8]"></div><div></div><div class="h-px bg-[#8f9fb8]"></div></div>
    <div role="tabpanel" class="border border-t-0 border-[#8f9fb8] px-[10px] pb-[10px]">
      <div class="grid grid-cols-2 pt-[13px]">
        <fieldset class="flex items-center">
          <legend class="contents">Sheet Display Location:</legend>
          <input id="top" type="radio" name="sheet" class="ml-[7px] size-[13px] appearance-none rounded-full border border-[#a8a8a8] bg-[#f0f0f0]"><label for="top" class="ml-1">Top</label>
          <input id="bot" type="radio" name="sheet" checked class="ml-[9px] size-[13px] appearance-none rounded-full border border-[#a8a8a8] bg-[radial-gradient(circle,#2f80ed_0_2px,#ececf0_3px)]"><label for="bot" class="ml-1">Bottom</label>
        </fieldset>
        <fieldset class="flex items-center">
          <legend class="contents">Report Display Location:</legend>
          <input id="cen" type="radio" name="report" class="ml-[7px] size-[13px] appearance-none rounded-full border border-[#a8a8a8] bg-[#f0f0f0]"><label for="cen" class="ml-1">Center</label>
          <input id="left" type="radio" name="report" checked class="ml-[9px] size-[13px] appearance-none rounded-full border border-[#a8a8a8] bg-[radial-gradient(circle,#2f80ed_0_2px,#ececf0_3px)]"><label for="left" class="ml-1">Left</label>
        </fieldset>
      </div>
      <div class="grid grid-cols-2 items-center pt-[14px]">
        <div class="flex items-center pl-1"><input id="row" type="checkbox" class="size-[13px] appearance-none border border-[#909090] bg-[#f4f4f7]"><label for="row" class="ml-1">Set Current Edit Row Background:</label>
          <button class="ml-[7px] grid h-5 w-[22px] place-items-center border border-[#d4d4d8] bg-white text-[#777]" aria-label="Background colour"><span class="border-b-[4px] border-[#858585]"><svg class="h-3 w-4"><use href="#bucket"/></svg></span></button></div>
        <div class="flex items-center pl-1"><span class="grid"><input id="prompt" type="checkbox" checked class="size-[13px] appearance-none bg-[#3190f0] [grid-area:1/1]"><svg class="pointer-events-none size-[13px] [grid-area:1/1]" viewBox="0 0 13 13"><path d="M2.500 6.500l3 3.500 5-7" fill="none" stroke="#fff" stroke-width="1.600"/></svg></span><label for="prompt" class="ml-1">Prompt Upon Leave Without Data Entry Submission</label></div>
      </div>
      <div class="flex items-center pt-[14px] pl-1">
        <span class="grid"><input id="tb" type="checkbox" checked class="size-[13px] appearance-none bg-[#3190f0] [grid-area:1/1]"><svg class="pointer-events-none size-[13px] [grid-area:1/1]" viewBox="0 0 13 13"><path d="M2.500 6.500l3 3.500 5-7" fill="none" stroke="#fff" stroke-width="1.600"/></svg></span><label for="tb" class="ml-1">Use Toolbar</label>
        <button class="ml-2 h-5 w-[41px] border border-[#d4d4d8] bg-white leading-[18px]">Edit</button>
      </div>
      <p class="pt-[10px]">Event Editing:</p>
      <div class="flex h-[33px] items-center pt-[5px] pl-[7px] text-[#333]">
        <button class="flex items-center" aria-label="Add event"><svg class="size-4"><use href="#plus"/></svg><svg class="size-[6px] text-[#777]"><use href="#down"/></svg></button>
        <button class="ml-3" aria-label="Edit event"><svg class="size-4"><use href="#pencil"/></svg></button>
        <button class="ml-[11px]" aria-label="Delete event"><svg class="size-[14px]" viewBox="0 0 14 14"><path d="M1 1l12 12M13 1L1 13" stroke="#ee3b35" stroke-width="2"/></svg></button>
      </div>
      <div class="h-[330px] border border-[#d4d4d8] bg-white"></div>
    </div>
  </div>
  <div class="flex justify-end gap-[9px] pt-[6px] pr-[14px] pb-[4px]">
    <button class="h-5 w-[37px] border border-[#d4d4d8] bg-white leading-[18px]"><u>O</u>K</button>
    <button class="h-5 w-[59px] border border-[#d4d4d8] bg-white leading-[18px]"><u>C</u>ancel</button>
  </div>
</section>

<!-- Step markers -->
<div class="pointer-events-none absolute top-0 left-[237px] h-[26px] w-[62px] border-[3px] border-[#fd3a3a]"></div>
<div class="pointer-events-none absolute top-[170px] left-[241px] h-[23px] w-[223px] border-[3px] border-[#fd3a3a]"></div>
<div class="pointer-events-none absolute top-[238px] left-[830px] h-[27px] w-[129px] border-[3px] border-[#fd3a3a]"></div>
<div class="absolute top-[29px] left-[251px] grid size-[30px] place-items-center rounded-full bg-[#fd3a3a] pb-[2px] font-['Open_Sans',sans-serif] text-xl text-white">1</div>
<div class="absolute top-[139px] left-[330px] grid size-[30px] place-items-center rounded-full bg-[#fd3a3a] pb-[2px] font-['Open_Sans',sans-serif] text-xl text-white">2</div>
<div class="absolute top-[268px] left-[877px] grid size-[30px] place-items-center rounded-full bg-[#fd3a3a] pb-[2px] font-['Open_Sans',sans-serif] text-xl text-white">3</div>
</body>
</html>
